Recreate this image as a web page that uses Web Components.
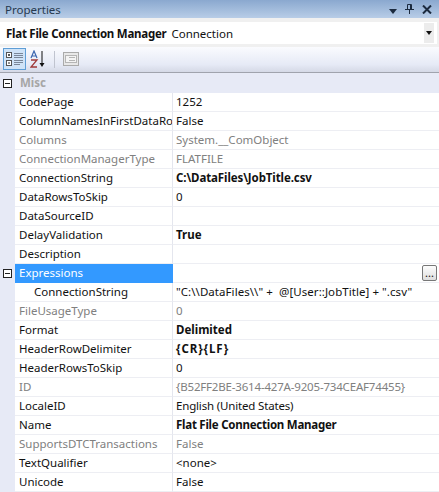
<!DOCTYPE html>
<html>
<head>
<meta charset="utf-8">
<style>
  html, body { margin: 0; padding: 0; background: #fff; overflow: hidden; }
  body { font-family: "Noto Sans", "DejaVu Sans", sans-serif; font-size: 11.5px; color: #111; }
</style>
</head>
<body>
<properties-panel>
  <prop-category name="Misc"></prop-category>
  <prop-row name="CodePage" value="1252"></prop-row>
  <prop-row name="ColumnNamesInFirstDataRow" value="False"></prop-row>
  <prop-row name="Columns" value="System.__ComObject" dim></prop-row>
  <prop-row name="ConnectionManagerType" value="FLATFILE" dim></prop-row>
  <prop-row name="ConnectionString" value="C:\DataFiles\JobTitle.csv" bold style="--val-spacing:-.1px"></prop-row>
  <prop-row name="DataRowsToSkip" value="0"></prop-row>
  <prop-row name="DataSourceID" value=""></prop-row>
  <prop-row name="DelayValidation" value="True" bold></prop-row>
  <prop-row name="Description" value=""></prop-row>
  <prop-row name="Expressions" value="" selected expander button></prop-row>
  <prop-row name="ConnectionString" value='"C:\\DataFiles\\" +  @[User::JobTitle] + ".csv"' child style="--val-spacing:.06px"></prop-row>
  <prop-row name="FileUsageType" value="0" dim></prop-row>
  <prop-row name="Format" value="Delimited" bold></prop-row>
  <prop-row name="HeaderRowDelimiter" value="{CR}{LF}" bold style="--val-spacing:.9px"></prop-row>
  <prop-row name="HeaderRowsToSkip" value="0"></prop-row>
  <prop-row name="ID" value="{B52FF2BE-3614-427A-9205-734CEAF74455}" dim style="--val-spacing:-.18px"></prop-row>
  <prop-row name="LocaleID" value="English (United States)" style="--val-spacing:-.17px"></prop-row>
  <prop-row name="Name" value="Flat File Connection Manager" bold style="--val-spacing:-.25px"></prop-row>
  <prop-row name="SupportsDTCTransactions" value="False" dim></prop-row>
  <prop-row name="TextQualifier" value="&lt;none&gt;"></prop-row>
  <prop-row name="Unicode" value="False"></prop-row>
</properties-panel>

<script>
const expander = `<svg width="9" height="9" viewBox="0 0 9 9"><rect x=".5" y=".5" width="8" height="8" fill="#fff" stroke="#222"/><path d="M2 4.5h5" stroke="#222"/></svg>`;

class PropertiesPanel extends HTMLElement {
  constructor() {
    super();
    this.attachShadow({ mode: 'open' }).innerHTML = `
    <style>
      :host { display: block; width: 439px; height: 492px; overflow: hidden; }
      .title {
        height: 18px; display: flex; align-items: center; padding: 0 7px 0 5px;
        background: linear-gradient(#8aa8cf, #b8cde7);
        color: #26394f;
      }
      .title span { flex: 1; }
      .title .arrow { margin: 4px 8px 0 0; }
      .title .pin { margin-right: 8px; }
      .combo-wrap { height: 29px; box-sizing: border-box; padding: 4px 2px 3px 0; background: #f0f0f0; }
      .combo { height: 22px; background: #fff; display: flex; align-items: center; padding-left: 6px; gap: 5px; }
      .combo b { font-weight: 700; letter-spacing: -.25px; flex: none; }
      .combo span { flex: 1; }
      .combo i { width: 10px; height: 20px; margin-right: 3px; background: #ececec; display: flex; align-items: center; justify-content: center; }
      .toolbar {
        height: 26px; box-sizing: border-box; display: flex; align-items: center; padding: 0 3px 1px; gap: 2px;
        background: linear-gradient(#fafbfe, #e6eaf6 70%, #d5d9e6);
        border-bottom: 1px solid #a0a3ad;
      }
      .btn { width: 22px; height: 22px; display: flex; align-items: center; justify-content: center; box-sizing: border-box; }
      .btn.on { background: #cfe3f7; border: 1px solid #5f9ed6; width: 23px; }
      .sep { width: 1px; height: 17px; background: #c0c4cf; margin: 0 3px 0 2px; }
      .grid { display: block; }
    </style>
    <div class="title">
      <span>Properties</span>
      <svg class="arrow" width="8" height="5" viewBox="0 0 8 5"><path d="M0 0h8L4 5z" fill="#1c2b3f"/></svg>
      <svg class="pin" width="9" height="10" viewBox="0 0 9 10"><path d="M2.5 .5h4v5h-4zM0 5.5h9M4.5 6v4M5.5 1v4" fill="none" stroke="#1c2b3f"/></svg>
      <svg width="10" height="9" viewBox="0 0 10 9"><path d="M1 .5l8 8M9 .5l-8 8" stroke="#1c2b3f" stroke-width="2"/></svg>
    </div>
    <div class="combo-wrap">
      <div class="combo">
        <b>Flat File Connection Manager</b><span>Connection</span>
        <i><svg width="6" height="4" viewBox="0 0 6 4"><path d="M0 0h6L3 4z" fill="#111"/></svg></i>
      </div>
    </div>
    <div class="toolbar">
      <div class="btn on">
        <svg width="19" height="16" viewBox="0 0 19 16">
          <rect x="1.5" y="1.5" width="5" height="5" fill="#fff" stroke="#555"/><path d="M3 4h2M4 3v2" stroke="#222"/>
          <rect x="1.5" y="9.5" width="5" height="5" fill="#fff" stroke="#555"/><path d="M3 12h2" stroke="#222"/>
          <path d="M9 2.5h9M9 4.5h9M9 6.5h9M9 9.5h9M9 11.5h9M9 13.5h6" stroke="#7a8799"/>
        </svg>
      </div>
      <div class="btn">
        <svg width="18" height="18" viewBox="0 0 18 18">
          <path d="M1 8l3-7 3 7M2.2 6h3.6" fill="none" stroke="#3a66b0" stroke-width="1.2"/>
          <path d="M1 10h6L1 17h6" fill="none" stroke="#a03a3a" stroke-width="1.3"/>
          <path d="M12 1v13" stroke="#111"/><path d="M9.5 13h5L12 17z" fill="#111"/>
        </svg>
      </div>
      <div class="sep"></div>
      <div class="btn">
        <svg width="16" height="14" viewBox="0 0 16 14">
          <rect x=".5" y=".5" width="15" height="13" fill="#e8e8e8" stroke="#aaa"/>
          <rect x="2.5" y="3.5" width="11" height="7" fill="#f4f4f4" stroke="#b5b5b5"/>
          <path d="M6 5.5h6M6 8.5h6" stroke="#b5b5b5"/>
        </svg>
      </div>
    </div>
    <div class="grid"><slot></slot></div>`;
  }
}

class PropCategory extends HTMLElement {
  constructor() {
    super();
    this.attachShadow({ mode: 'open' }).innerHTML = `
    <style>
      :host { display: flex; height: 20px; background: #e7eaf6; align-items: center; }
      .gut { width: 15px; display: flex; justify-content: center; box-sizing: border-box; }
      b { padding: 0 0 2px 5px; color: #a6a6a6; }
    </style>
    <div class="gut">${expander}</div><b>${this.getAttribute('name')}</b>`;
  }
}

class PropRow extends HTMLElement {
  constructor() {
    super();
    const name = this.getAttribute('name');
    const value = this.getAttribute('value').replace(/&/g, '&amp;').replace(/</g, '&lt;');
    const button = this.hasAttribute('button') ? `<u>...</u>` : '';
    this.attachShadow({ mode: 'open' }).innerHTML = `
    <style>
      :host { display: flex; height: 19px; box-sizing: border-box; background: #e7eaf6; white-space: pre; }
      :host([dim]) { color: #808080; }
      .gut { width: 15px; flex: none; display: flex; align-items: center; justify-content: center; box-sizing: border-box; }
      .name, .val { background: #fff; border-bottom: 1px solid #edeef3; padding-bottom: 2px; display: flex; align-items: center; overflow: hidden; box-sizing: border-box; }
      .name { width: 158px; flex: none; padding-left: 4px; border-right: 1px solid #e4e6ee; }
      :host([child]) .name { padding-left: 19px; }
      :host([selected]) .name { background: #3399ff; color: #fff; border-color: #3399ff; }
      .val { flex: 1; padding-left: 3px; position: relative; letter-spacing: var(--val-spacing, 0); }
      :host([bold]) .val { font-weight: 700; }
      u { position: absolute; right: 2px; top: 1px; width: 15px; height: 16px; box-sizing: border-box; border: 1px solid #777; border-radius: 2px;
          background: linear-gradient(#fdfdfd, #dedede); text-decoration: none; font-size: 11px; line-height: 13px; text-align: center; color: #111; }
    </style>
    <div class="gut">${this.hasAttribute('expander') ? expander : ''}</div>
    <div class="name">${name}</div>
    <div class="val">${value}${button}</div>`;
  }
}

customElements.define('properties-panel', PropertiesPanel);
customElements.define('prop-category', PropCategory);
customElements.define('prop-row', PropRow);
</script>
</body>
</html>
